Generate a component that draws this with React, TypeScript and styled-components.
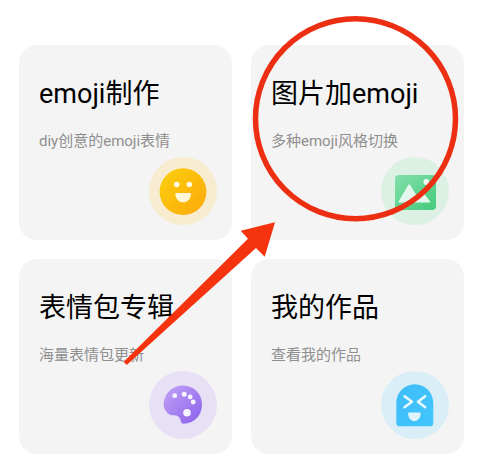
import React from 'react';
import styled, { createGlobalStyle } from 'styled-components';

const GlobalStyle = createGlobalStyle`
  * { box-sizing: border-box; }
  body {
    margin: 0;
    background: #fff;
    font-family: Roboto, "Noto Sans CJK SC", sans-serif;
  }
`;

const Page = styled.main`
  position: relative;
  padding: 45px 16px 19px 19px;
`;

const CardGrid = styled.nav`
  display: grid;
  grid-template-columns: repeat(2, 1fr);
  gap: 19px;
`;

const Card = styled.a`
  display: flex;
  flex-direction: column;
  padding: 30px 15px 15px 20px;
  border-radius: 18px;
  background: #f4f4f4;
  color: #000;
  text-decoration: none;
`;

const Title = styled.span`
  font-size: 27px;
  line-height: 38px;
  white-space: nowrap;
`;

const Subtitle = styled.span`
  margin-top: 18px;
  color: #8f8f8f;
  font-size: 15px;
  line-height: 20px;
  white-space: nowrap;
`;

const Badge = styled.span<{ $tint: string }>`
  align-self: flex-end;
  width: 68px;
  height: 68px;
  margin-top: 6px;
  border-radius: 50%;
  background: ${({ $tint }) => $tint};

  svg { display: block; }
`;

const Annotation = styled.svg`
  position: absolute;
  top: 0;
  left: 0;
  width: 100%;
  height: auto;
  pointer-events: none;
`;

function Gradient({ id, from, to }: { id: string; from: string; to: string }) {
  return (
    <defs>
      <linearGradient id={id} x1="0" y1="0" x2="1" y2="1">
        <stop offset="0" stopColor={from} />
        <stop offset="1" stopColor={to} />
      </linearGradient>
    </defs>
  );
}

function IconFrame({ children }: { children: React.ReactNode }) {
  return (
    <svg width="68" height="68" viewBox="0 0 68 68" fill="none" aria-hidden="true">
      {children}
    </svg>
  );
}

function SmileIcon() {
  return (
    <IconFrame>
      <Gradient id="smile" from="#fbd00b" to="#fca80c" />
      <circle cx="34" cy="34.7" r="23.4" fill="url(#smile)" />
      <circle cx="27.8" cy="27.5" r="2.7" fill="#fffbea" />
      <circle cx="40.3" cy="27.5" r="2.7" fill="#fffbea" />
      <path d="M27.3 36H41a1 1 0 0 1 1 1c-.4 5-3.5 8.3-7.9 8.3S26.7 42 26.3 37a1 1 0 0 1 1-1Z" fill="#fff7d6" />
    </IconFrame>
  );
}

function PictureIcon() {
  return (
    <IconFrame>
      <Gradient id="picture" from="#84dfaa" to="#43cb7c" />
      <rect x="14" y="18" width="41" height="35" rx="4" fill="url(#picture)" />
      <circle cx="45.3" cy="25" r="2.9" fill="#f0fbf4" />
      <path d="M27.2 28q1-1.5 2 0L35.5 38.5 40 34.8q1-.8 1.8.3L49 44.3q.8 1.2-.7 1.2H18.5q-1.5 0-.8-1.2Z" fill="#e4f7ec" />
    </IconFrame>
  );
}

function PaletteIcon() {
  return (
    <IconFrame>
      <Gradient id="palette" from="#c3a4f6" to="#8a5fec" />
      <path d="M34 14.5C45 14.5 53 23 53 33.5 53 44.5 45 52.7 34.5 52.7 32.5 52.7 32 51.5 31.6 49.5 31 46 28.5 44.3 25 44.3 22.5 44.3 20.5 44 18.5 42 15.8 39 14.4 36.5 14.6 33 15 22.5 23.5 14.5 34 14.5Z" fill="url(#palette)" />
      <g fill="#f8f4ff">
        <circle cx="25.7" cy="24.7" r="2.4" />
        <circle cx="35.2" cy="23.3" r="2.5" />
        <circle cx="41.2" cy="25.9" r="2.4" />
        <circle cx="44.2" cy="31" r="2.4" />
        <circle cx="38" cy="41.8" r="3.8" />
      </g>
    </IconFrame>
  );
}

function LaughIcon() {
  return (
    <IconFrame>
      <Gradient id="laugh" from="#3fbcf8" to="#42c6fd" />
      <path d="M15.3 32C15.3 21.5 23.5 13.2 33.8 13.2S52.3 21.5 52.3 32V52.3a3 3 0 0 1-3 3H18.3a3 3 0 0 1-3-3Z" fill="url(#laugh)" />
      <path d="M23.5 25.2 31 30.7 23.5 36.2M44.2 25.2 37 30.7 44.2 36.2" stroke="#eafaff" strokeWidth="2.5" strokeLinecap="round" strokeLinejoin="round" />
      <path d="M28.3 41.5H38.5a1.2 1.2 0 0 1 1.2 1.3c-.3 4.3-2.7 7.3-6.3 7.3s-6-3-6.3-7.3a1.2 1.2 0 0 1 1.2-1.3Z" fill="#dff4fb" />
    </IconFrame>
  );
}

const cards = [
  { id: 'make', title: 'emoji制作', subtitle: 'diy创意的emoji表情', tint: '#f8ecd0', Icon: SmileIcon },
  { id: 'picture', title: '图片加emoji', subtitle: '多种emoji风格切换', tint: '#dcf1e4', Icon: PictureIcon },
  { id: 'album', title: '表情包专辑', subtitle: '海量表情包更新', tint: '#e8e1f6', Icon: PaletteIcon },
  { id: 'works', title: '我的作品', subtitle: '查看我的作品', tint: '#d9eef7', Icon: LaughIcon },
];

export default function App() {
  return (
    <Page>
      <GlobalStyle />
      <CardGrid>
        {cards.map(({ id, title, subtitle, tint, Icon }) => (
          <Card key={id} href={`#${id}`}>
            <Title>{title}</Title>
            <Subtitle>{subtitle}</Subtitle>
            <Badge $tint={tint}>
              <Icon />
            </Badge>
          </Card>
        ))}
      </CardGrid>
      <Annotation viewBox="0 0 480 473" aria-hidden="true">
        <circle cx="355.5" cy="118.7" r="100" fill="none" stroke="#ec2f12" strokeWidth="5.5" />
        <path d="M275 222.3 240.7 230.7 248 238.7 123.7 361.7 126.7 365 256 248 264.7 256.7Z" fill="#f5330f" />
      </Annotation>
    </Page>
  );
}
